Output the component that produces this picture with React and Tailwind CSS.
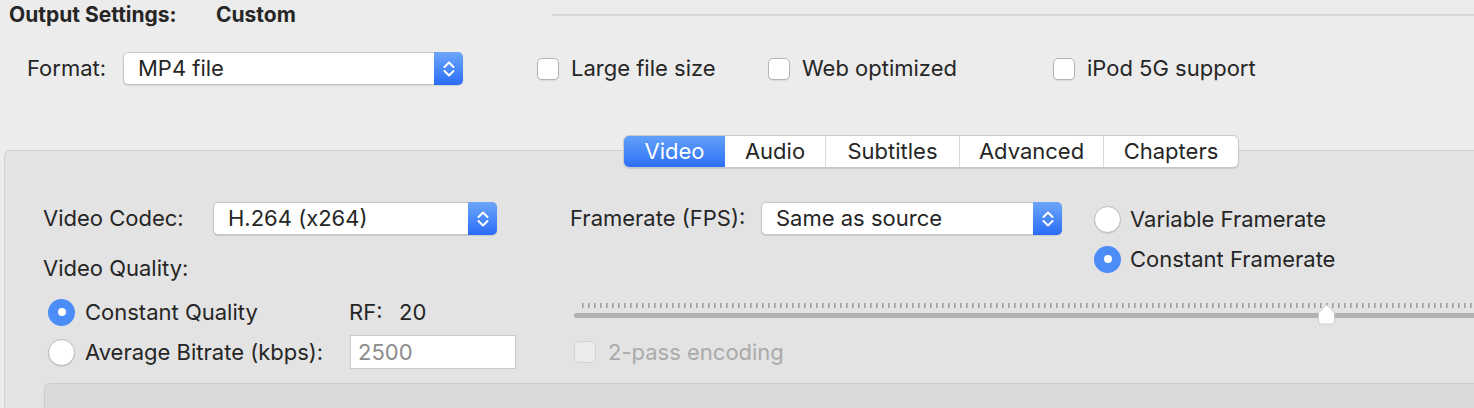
import clsx from 'clsx';

const ticks = Array.from({ length: 160 }, (_, i) => i);

function Chevrons() {
    return (
        <svg width="14" height="22" viewBox="0 0 14 22" fill="none" stroke="white" strokeWidth="2" strokeLinecap="round" strokeLinejoin="round">
            <path d="M2.5 9 L7 4.5 L11.5 9" />
            <path d="M2.5 13 L7 17.5 L11.5 13" />
        </svg>
    );
}

function Select({ className, value }) {
    return (
        <div className={clsx('flex h-[33px] rounded-[5px] border border-[#c6c6c6] bg-white shadow-[0_1px_1px_rgba(0,0,0,0.12)]', className)}>
            <div className="flex flex-1 items-center pl-[14px] text-[#262626]">{value}</div>
            <div className="-my-px -mr-px flex w-[29px] items-center justify-center rounded-r-[5px] bg-linear-to-b from-[#6da6f9] to-[#2a6bf6]">
                <Chevrons />
            </div>
        </div>
    );
}

function Checkbox({ label, disabled }) {
    return (
        <div className="flex items-center gap-[12px]">
            <div
                className={clsx(
                    'h-[22px] w-[22px] rounded-[5px] border',
                    disabled ? 'border-[#d2d2d2] bg-[#ebebeb]' : 'border-[#b4b4b4] bg-white shadow-[0_1px_1px_rgba(0,0,0,0.08)]'
                )}
            />
            <span className={disabled ? 'text-[#aaaaaa]' : 'text-[#262626]'}>{label}</span>
        </div>
    );
}

function Radio({ checked }) {
    return checked ? (
        <div className="flex h-[27px] w-[27px] shrink-0 items-center justify-center rounded-full bg-[#4b8cf7]">
            <div className="h-[8px] w-[8px] rounded-full bg-white" />
        </div>
    ) : (
        <div className="h-[27px] w-[27px] shrink-0 rounded-full border border-[#b9b9b9] bg-white shadow-[0_1px_1px_rgba(0,0,0,0.08)]" />
    );
}

export default function App() {
    const tabs = [
        ['Video', 'w-[101px]'],
        ['Audio', 'w-[100px]'],
        ['Subtitles', 'w-[134px]'],
        ['Advanced', 'w-[144px]'],
        ['Chapters', 'w-[135px]'],
    ];

    return (
        <div className="flex h-[408px] w-[1474px] flex-col overflow-hidden bg-[#ececec] font-[Inter,sans-serif] text-[22px] text-[#262626]">
            {/* header */}
            <div className="flex h-[30px] items-center pl-[9px] text-[21px] font-bold">
                <span className="w-[207px]">Output Settings:</span>
                <span className="w-[336px]">Custom</span>
                <div className="h-[2px] flex-1 bg-[#d7d7d7]" />
            </div>

            {/* format row */}
            <div className="mt-[22px] flex h-[33px] items-center pl-[27px]">
                <span className="w-[96px]">Format:</span>
                <Select className="w-[340px]" value="MP4 file" />
                <div className="ml-[74px] w-[231px]">
                    <Checkbox label="Large file size" />
                </div>
                <div className="w-[285px]">
                    <Checkbox label="Web optimized" />
                </div>
                <Checkbox label="iPod 5G support" />
            </div>

            {/* tabs */}
            <div className="relative z-10 mt-[50px] flex pl-[623px]">
                <div className="flex h-[33px] overflow-hidden rounded-[6px] border border-[#c8c8c8] bg-white shadow-[0_1px_1px_rgba(0,0,0,0.1)]">
                    {tabs.map(([name, w], i) => (
                        <div
                            key={name}
                            className={clsx(
                                'flex items-center justify-center',
                                w,
                                i === 0 ? 'bg-linear-to-b from-[#62a0f9] to-[#2d6ff6] text-white' : 'border-l border-[#dadada]',
                                i === 1 && 'border-l-0'
                            )}
                        >
                            {name}
                        </div>
                    ))}
                </div>
            </div>

            {/* panel */}
            <div className="-mt-[18px] ml-[4px] flex flex-1 flex-col rounded-tl-[6px] border-l border-t border-[#d2d2d2] bg-[#e3e3e3] pl-[38px] pt-[51px]">
                <div className="flex">
                    <div className="flex shrink-0 flex-col">
                        <div className="flex h-[33px] items-center">
                            <span className="w-[170px]">Video Codec:</span>
                            <Select className="w-[284px]" value="H.264 (x264)" />
                            <span className="ml-[73px] w-[191px]">Framerate (FPS):</span>
                            <Select className="w-[301px]" value="Same as source" />
                        </div>
                        <div className="mt-[20px] leading-[26px]">Video Quality:</div>
                    </div>
                    <div className="ml-[32px] flex shrink-0 flex-col gap-[6px]">
                        <div className="flex h-[34px] items-center gap-[9px]">
                            <Radio />
                            <span>Variable Framerate</span>
                        </div>
                        <div className="flex h-[34px] items-center gap-[9px]">
                            <Radio checked />
                            <span>Constant Framerate</span>
                        </div>
                    </div>
                </div>

                <div className="mt-[14px] flex">
                    <div className="flex w-[531px] shrink-0 flex-col gap-[6px] pl-[5px]">
                        <div className="flex h-[34px] items-center">
                            <Radio checked />
                            <span className="ml-[10px] w-[264px]">Constant Quality</span>
                            <span className="w-[50px]">RF:</span>
                            <span>20</span>
                        </div>
                        <div className="flex h-[34px] items-center">
                            <Radio />
                            <span className="ml-[10px] w-[265px]">Average Bitrate (kbps):</span>
                            <div className="flex h-[34px] w-[166px] items-center border border-[#c9c9c9] bg-white pl-[7px] text-[#8b8b8b]">
                                2500
                            </div>
                        </div>
                    </div>
                    <div className="flex w-[1000px] shrink-0 flex-col gap-[6px]">
                        <div className="relative h-[34px]">
                            <svg className="absolute left-0 top-[8px]" width="1000" height="6">
                                {ticks.map((i) => (
                                    <rect key={i} x={8 + i * 6} y="0" width="1.6" height="5" fill="#9d9d9d" />
                                ))}
                            </svg>
                            <div className="absolute left-0 right-0 top-[18px] h-[5px] rounded-full bg-[#b1b1b1]" />
                            <svg className="absolute left-[743px] top-[9px]" width="19" height="21" viewBox="0 0 19 21">
                                <path
                                    d="M9.5 0.8 L17.5 9 V17 Q17.5 20 14.5 20 H4.5 Q1.5 20 1.5 17 V9 Z"
                                    fill="white"
                                    stroke="#c4c4c4"
                                    strokeWidth="0.8"
                                />
                            </svg>
                        </div>
                        <div className="flex h-[34px] items-center">
                            <Checkbox label="2-pass encoding" disabled />
                        </div>
                    </div>
                </div>

                <div className="ml-[1px] mt-[14px] flex-1 rounded-tl-[6px] border-l border-t border-[#cdcdcd] bg-[#dadada]" />
            </div>
        </div>
    );
}
